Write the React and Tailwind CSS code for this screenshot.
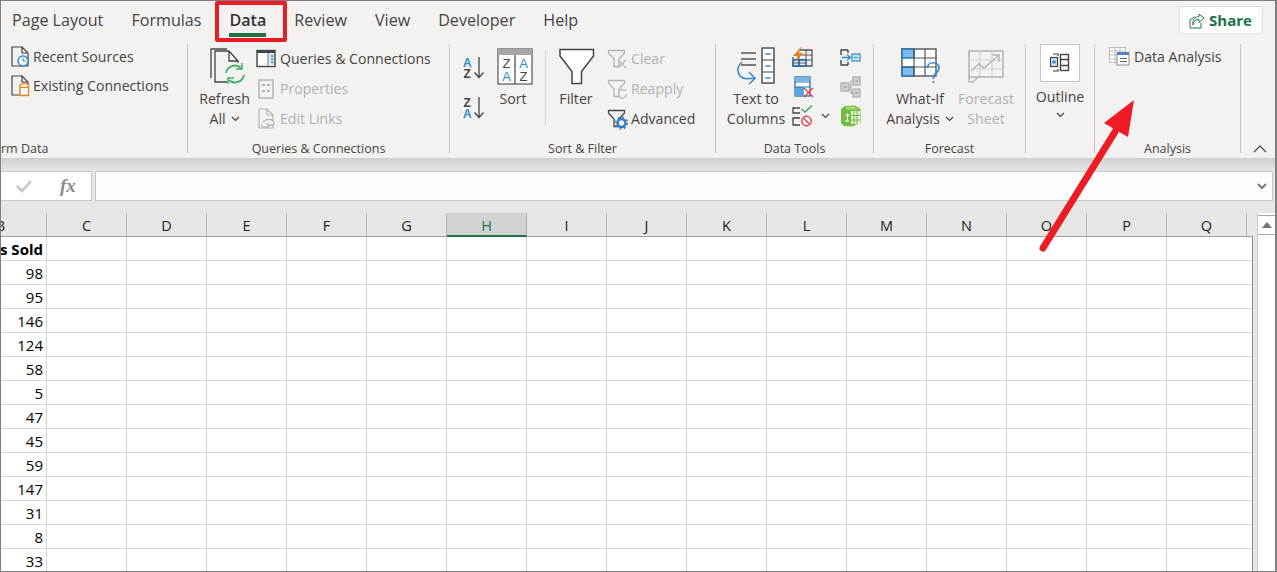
import React from "react";

const D = "#444444", G = "#b4b4b4", B = "#2b8ccf";

const Page = ({ c = D, x = 1, y = 1, w = 16, h = 19 }) => (
  <path d={`M${x + w - 6} ${y}H${x}V${y + h}H${x + w}V${y + 6}L${x + w - 6} ${y}V${y + 6}H${x + w}`} fill="none" stroke={c} strokeWidth="1.2" />
);

const Svg = ({ w, h, children, className = "" }) => (
  <svg width={w} height={h} viewBox={`0 0 ${w} ${h}`} className={`shrink-0 ${className}`}>{children}</svg>
);

const Funnel = ({ c }) => (
  <path d="M1.5 2.5H17.5V5L12 11V18.5H7V11L1.5 5Z" fill="none" stroke={c} strokeWidth="1.3" />
);

const Icons = {
  recent: (
    <Svg w={22} h={22}>
      <Page y={1} />
      <circle cx="12" cy="15" r="5" fill="#fff" stroke={B} strokeWidth="1.4" />
      <path d="M12 12V15H15" fill="none" stroke={B} strokeWidth="1" />
    </Svg>
  ),
  existing: (
    <Svg w={22} h={22}>
      <Page y={1} />
      <path d="M9 10.5C9 8 17.5 8 17.5 10.5V20.5H9Z" fill="#fff" stroke="#e8811f" strokeWidth="1.4" />
      <path d="M9 11.5C11 13 15.5 13 17.5 11.5" fill="none" stroke="#e8811f" strokeWidth="1.2" />
    </Svg>
  ),
  refresh: (
    <Svg w={36} h={38}>
      <path d="M1 30V1H17" fill="none" stroke={D} strokeWidth="1.3" />
      <path d="M19 3H5V34H17" fill="#f3f2f1" stroke={D} strokeWidth="1.3" />
      <path d="M19 3L28 13V15M19 3V13H28" fill="none" stroke={D} strokeWidth="1.3" />
      <path d="M16 25A9 9 0 0 1 31 20" fill="none" stroke="#45ad6d" strokeWidth="1.8" />
      <path d="M34 27A9 9 0 0 1 19 32" fill="none" stroke="#45ad6d" strokeWidth="1.8" />
      <path d="M32 15V21H26M18 36V30H24" fill="none" stroke="#45ad6d" strokeWidth="1.5" />
    </Svg>
  ),
  queries: (
    <Svg w={24} h={20}>
      <rect x="1" y="1.5" width="18" height="16" fill="#fff" stroke={D} strokeWidth="1.4" />
      <rect x="1" y="1" width="18" height="3" fill={D} />
      <rect x="12" y="4" width="6" height="13" fill="#d9e9f6" />
      <path d="M15 7H17.5M15 10H17.5M15 13H17.5" stroke={B} strokeWidth="1.3" />
      <path d="M12 4V17" stroke="#777" />
    </Svg>
  ),
  properties: (
    <Svg w={24} h={22}>
      <rect x="3" y="2" width="14" height="18" fill="none" stroke={G} strokeWidth="1.5" />
      <path d="M6 7H9M6 13H9M11 7H14M11 13H14" stroke={G} strokeWidth="2" />
    </Svg>
  ),
  editlinks: (
    <Svg w={24} h={22}>
      <Page c={G} x={3} y={1} w={14} h={19} />
      <path d="M7 14C10 10 18 11 18 15C18 18 11 18 11 15M13 18C9 21 4 19 6 16" fill="#f3f2f1" stroke={G} strokeWidth="1.3" />
    </Svg>
  ),
  sortaz: (
    <Svg w={24} h={24}>
      <text x="0" y="11" fontSize="12" fontWeight="700" fill={B} fontFamily="Liberation Sans, sans-serif">A</text>
      <text x="0.5" y="22" fontSize="12" fontWeight="700" fill={D} fontFamily="Liberation Sans, sans-serif">Z</text>
      <path d="M16 1V21M11.5 16.5L16 21.5L20.5 16.5" fill="none" stroke={D} strokeWidth="1.3" />
    </Svg>
  ),
  sortza: (
    <Svg w={24} h={24}>
      <text x="0.5" y="11" fontSize="12" fontWeight="700" fill={D} fontFamily="Liberation Sans, sans-serif">Z</text>
      <text x="0" y="22" fontSize="12" fontWeight="700" fill={B} fontFamily="Liberation Sans, sans-serif">A</text>
      <path d="M16 1V21M11.5 16.5L16 21.5L20.5 16.5" fill="none" stroke={D} strokeWidth="1.3" />
    </Svg>
  ),
  sort: (
    <Svg w={36} h={37}>
      <rect x="1" y="1" width="34" height="35" fill="#fff" stroke="#6b6b6b" strokeWidth="1.4" />
      <rect x="1" y="1" width="34" height="6" fill="#a6a6a6" />
      <path d="M18 7V36" stroke={D} strokeWidth="1.2" />
      <text x="9.5" y="20" textAnchor="middle" fontSize="13" fill={D} fontFamily="Liberation Sans, sans-serif">Z</text>
      <text x="9.5" y="33" textAnchor="middle" fontSize="13" fill={B} fontFamily="Liberation Sans, sans-serif">A</text>
      <text x="26.5" y="20" textAnchor="middle" fontSize="13" fill={B} fontFamily="Liberation Sans, sans-serif">A</text>
      <text x="26.5" y="33" textAnchor="middle" fontSize="13" fill={D} fontFamily="Liberation Sans, sans-serif">Z</text>
    </Svg>
  ),
  filter: (
    <Svg w={36} h={37}>
      <path d="M1 1.5H34.5V8L22.5 23.5V35.5H13V23.5L1 8Z" fill="#fff" stroke={D} strokeWidth="1.5" />
    </Svg>
  ),
  clear: (
    <Svg w={24} h={22}>
      <Funnel c={G} />
      <path d="M11 12L19 20M19 12L11 20" stroke={G} strokeWidth="1.3" />
    </Svg>
  ),
  reapply: (
    <Svg w={24} h={22}>
      <Funnel c={G} />
      <path d="M11 15A5 5 0 0 1 19 13M20 16A5 5 0 0 1 12 19" fill="#f3f2f1" stroke={G} strokeWidth="1.2" />
    </Svg>
  ),
  advanced: (
    <Svg w={24} h={22}>
      <Funnel c={D} />
      <circle cx="14.5" cy="15" r="4" fill="#f3f2f1" stroke="#2f7fc4" strokeWidth="2.6" />
      <circle cx="14.5" cy="15" r="6" fill="none" stroke="#2f7fc4" strokeWidth="1.4" strokeDasharray="2 2.7" />
    </Svg>
  ),
  textcols: (
    <Svg w={40} h={40}>
      <path d="M5 6H20M5 12H20M5 18H20" stroke="#555" strokeWidth="1.4" />
      <rect x="26" y="1" width="12" height="35" fill="#fff" stroke={D} strokeWidth="1.4" />
      <path d="M26 13H38M26 25H38" stroke={D} strokeWidth="1.2" />
      <path d="M29.5 7H34.5M29.5 19H34.5M29.5 31H34.5" stroke={B} strokeWidth="1.4" />
      <path d="M6 15C-1 21 1 33 13 31.5H18" fill="none" stroke={B} strokeWidth="1.5" />
      <path d="M13 25L19 31.5L13 37" fill="none" stroke={B} strokeWidth="1.5" />
    </Svg>
  ),
  flash: (
    <Svg w={24} h={22}>
      <path d="M7 3H20V19H1V10" fill="none" stroke="#555" strokeWidth="1.3" />
      <path d="M1.5 12.5H14M1.5 16H14M7 8V19M14 3V19M7 8H20M14 13H20" fill="none" stroke="#555" strokeWidth="1" />
      <path d="M1 13V19H14V13H1M7 13V19" fill="none" stroke="#1f6fb5" strokeWidth="1.5" />
      <path d="M9 0L1 9H5.5L3 15L11 6H6.5L10 0Z" fill="#e8811f" />
    </Svg>
  ),
  dupes: (
    <Svg w={24} h={22}>
      <rect x="3" y="1" width="15" height="19" fill="#fff" stroke="#1f6fb5" strokeWidth="1.3" />
      <rect x="3" y="1" width="15" height="4" fill="#7fb2dd" />
      <rect x="3" y="11" width="9" height="9" fill="#5ea3dc" />
      <path d="M3 6H18M3 11H18" stroke="#1f6fb5" />
      <path d="M12 12L21 21M21 12L12 21" stroke="#e8414a" strokeWidth="1.4" />
    </Svg>
  ),
  validate: (
    <Svg w={24} h={22}>
      <path d="M8 3H1V8H8M8 13H1V20H8" fill="none" stroke={D} strokeWidth="1.3" />
      <path d="M9.5 4L13 7L20 0.5" fill="none" stroke="#3fa35f" strokeWidth="1.5" />
      <circle cx="14.5" cy="16" r="4.7" fill="#fff" stroke="#e8414a" strokeWidth="1.5" />
      <path d="M11.5 13L17.5 19" stroke="#e8414a" strokeWidth="1.5" />
    </Svg>
  ),
  consolidate: (
    <Svg w={22} h={20}>
      <path d="M8 2H1V7M1 12V17H8" fill="none" stroke={D} strokeWidth="1.4" />
      <path d="M8 2V5M8 14V17" stroke={D} strokeWidth="1.4" />
      <path d="M2 9.5H10M7 6.5L10.5 9.5L7 12.5" fill="none" stroke={B} strokeWidth="1.3" />
      <rect x="12" y="6" width="8" height="7" fill="#cfe4f5" stroke={B} strokeWidth="1.2" />
      <path d="M14 9.5H18" stroke={B} />
    </Svg>
  ),
  relations: (
    <Svg w={22} h={22}>
      <rect x="1" y="7" width="8" height="8" fill="#d0d0d0" stroke={G} strokeWidth="1.4" />
      <rect x="13" y="1" width="7" height="8" fill="#d0d0d0" stroke={G} strokeWidth="1.4" />
      <rect x="13" y="13" width="7" height="8" fill="#d0d0d0" stroke={G} strokeWidth="1.4" />
      <path d="M3 11H7M15 5H18M15 17H18" stroke="#999" />
      <path d="M9 11H11V5H13M11 11V17H13" fill="none" stroke={G} strokeWidth="1.4" />
    </Svg>
  ),
  model: (
    <Svg w={22} h={22}>
      <path d="M5 1L15 0.5L20.5 4V18L12 21.5L4 21L1 18V4Z" fill="#74bb42" />
      <path d="M5 2L14 1.5L19 4.5H7Z" fill="#a5d67c" />
      <rect x="11" y="6" width="9" height="13" fill="#e5f3d8" />
      <path d="M14 6V19M17 6V19M11 10.5H20M11 15H20" stroke="#74bb42" />
      <path d="M7.5 16V9M5.8 11L7.5 9L9.2 11M5 16H9" stroke="#fff" strokeWidth="1.1" fill="none" />
    </Svg>
  ),
  whatif: (
    <Svg w={40} h={38}>
      <rect x="1" y="1" width="34" height="27" fill="#fff" stroke="#555" strokeWidth="1.4" />
      <rect x="1" y="1" width="12" height="9" fill="#7dbbea" stroke="#1f6fb5" strokeWidth="1.4" />
      <rect x="1" y="19" width="12" height="9" fill="#7dbbea" stroke="#1f6fb5" strokeWidth="1.4" />
      <path d="M13 10H35M1 19H35M13 1V28M24 1V28" stroke="#555" strokeWidth="1.2" />
      <path d="M26.5 20C26.5 13 38 13 38 20C38 25 32.5 25 32.5 30V31M32.5 33V35" fill="none" stroke={B} strokeWidth="1.7" />
    </Svg>
  ),
  forecast: (
    <Svg w={37} h={33}>
      <rect x="1" y="1" width="34" height="26" fill="none" stroke={G} strokeWidth="1.6" />
      <path d="M12 1V27M24 1V27M1 10H35M1 19H35" stroke="#cfcfcf" strokeWidth="1.2" />
      <path d="M3 21L11 14L16 18L30 6M24 5H31V12" fill="none" stroke={G} strokeWidth="1.4" />
      <path d="M10 27L5 32H1V27" fill="none" stroke={G} strokeWidth="1.4" />
    </Svg>
  ),
  outline: (
    <Svg w={22} h={20}>
      <rect x="1.5" y="4.5" width="7" height="9" fill="#cfe4f5" stroke={D} strokeWidth="1.2" />
      <path d="M3 9H7M5 7V11" stroke={B} strokeWidth="1.3" />
      <path d="M4 1H9V3M4 18H9V16" fill="none" stroke={D} strokeWidth="1.2" />
      <rect x="11.5" y="1.5" width="8" height="16" fill="#fff" stroke={D} strokeWidth="1.4" />
      <path d="M11.5 6.5H19.5M11.5 12.5H19.5" stroke={D} strokeWidth="1.3" />
    </Svg>
  ),
  analysis: (
    <Svg w={25} h={20}>
      <rect x="0.5" y="0.5" width="16" height="15" fill="#fff" stroke="#bdbdbd" />
      <path d="M0.5 4H16M0.5 8H16M0.5 12H16M6 0.5V15.5M11 0.5V15.5" stroke="#bdbdbd" />
      <rect x="8" y="6" width="12" height="12" fill="#fff" stroke="#8c8c8c" />
      <rect x="8" y="5" width="12" height="3" fill="#4f81bd" />
      <path d="M11 11.5H18M11 14.5H18" stroke="#666" />
    </Svg>
  ),
  share: (
    <Svg w={17} h={16}>
      <path d="M2 7V15H13V10M2 7L7 3.5" fill="none" stroke="#217346" strokeWidth="1" />
      <path d="M5 12C5 8 8 6.5 11 6.5V9.5L16 5L11 1V3.5C7 4 4 7 5 12Z" fill="#fff" stroke="#217346" strokeWidth="1" />
    </Svg>
  ),
};

const Chevron = ({ className = "", color = "#444", w = 9 }) => (
  <svg width={w} height="6" viewBox="0 0 9 6" className={`shrink-0 ${className}`}>
    <path d="M1 1L4.5 4.5L8 1" fill="none" stroke={color} strokeWidth="1.2" />
  </svg>
);

const Sep = () => <div className="w-px h-[109px] mt-[2px] shrink-0 bg-[#c8c6c4]" />;

const Group = ({ w, label, left, children }) => (
  <div className={`${w} h-[116px] shrink-0 flex flex-col`}>
    <div className="flex-1 flex min-h-0">{children}</div>
    <div className={`h-[20px] leading-[20px] pt-px text-[12.5px] text-[#444] whitespace-nowrap ${left ? "text-left" : "text-center"}`}>{label}</div>
  </div>
);

const Big = ({ w, icon, lines, disabled, iconClass = "" }) => (
  <div className={`${w} shrink-0 flex flex-col items-center`}>
    <div className={`h-[47px] w-full flex items-center justify-center pt-[2px] ${iconClass}`}>{icon}</div>
    {lines.map((l, i) => (
      <div key={i} className={`h-[20px] leading-[20px] text-[14.2px] whitespace-nowrap flex items-center gap-[5px] ${disabled ? "text-[#b1b1b1]" : "text-[#444]"}`}>
        {l.replace("~", "")}
        {l.endsWith("~") && <Chevron />}
      </div>
    ))}
  </div>
);

const Small = ({ icon, label, disabled, h }) => (
  <div className={`${h} flex items-center whitespace-nowrap text-[14.1px] ${disabled ? "text-[#b1b1b1]" : "text-[#444]"}`}>
    {icon}
    <span>{label}</span>
  </div>
);

const tabs = ["Page Layout", "Formulas", "Data", "Review", "View", "Developer", "Help"];
const cols = ["C", "D", "E", "F", "G", "H", "I", "J", "K", "L", "M", "N", "O", "P"];
const values = [98, 95, 146, 124, 58, 5, 47, 45, 59, 147, 31, 8, 33];

export default function App() {
  return (
    <div className="relative w-[1277px] h-[572px] overflow-hidden box-border border border-r-2 border-[#7f7f7f] bg-[#e6e6e6] font-['Open_Sans',sans-serif]">
      {/* Tabs */}
      <div className="h-[41px] bg-[#f3f2f1] flex items-start relative">
        <div className="flex gap-7 pl-[11px] pt-[5px] text-[16.13px] leading-[28px] text-[#444]">
          {tabs.map((t) => (
            <div key={t} className={`relative whitespace-nowrap ${t === "Data" ? "font-semibold text-[#333]" : ""}`}>
              {t}
              {t === "Data" && <div className="absolute left-0 right-0 top-[27px] h-[4px] bg-[#217346]" />}
            </div>
          ))}
        </div>
        <div className="ml-auto mr-[12px] mt-[5px] w-[84px] h-[28px] bg-white border border-[#e1dfdd] rounded-[3px] flex items-center justify-center gap-[4px] pt-px pr-[2px] text-[#217346] font-bold text-[15px]">
          {Icons.share}
          <span>Share</span>
        </div>
      </div>

      {/* Ribbon */}
      <div className="h-[116px] bg-[#f3f2f1] flex">
        <Group w="w-[186px]" label="rm Data" left>
          <div className="pl-[10px]">
            <Small h="h-[29px]" icon={Icons.recent} label="Recent Sources" />
            <Small h="h-[29px]" icon={Icons.existing} label="Existing Connections" />
          </div>
        </Group>
        <Sep />
        <Group w="w-[261px]" label="Queries & Connections">
          <div className="flex pl-[12px]">
            <Big w="w-[49px]" icon={Icons.refresh} iconClass="pl-[6px]" lines={["Refresh", "All~"]} />
            <div className="ml-[7px] pt-[2px]">
              <Small h="h-[30px]" icon={Icons.queries} label="Queries & Connections" />
              <Small h="h-[30px]" icon={Icons.properties} label="Properties" disabled />
              <Small h="h-[30px]" icon={Icons.editlinks} label="Edit Links" disabled />
            </div>
          </div>
        </Group>
        <Sep />
        <Group w="w-[265px]" label="Sort & Filter">
          <div className="flex pl-[13px]">
            <div className="w-[25px] pt-[14px] flex flex-col gap-[16px]">
              {Icons.sortaz}
              {Icons.sortza}
            </div>
            <Big w="w-[50px]" icon={Icons.sort} iconClass="pl-[3px]" lines={["Sort"]} />
            <div className="w-px h-[75px] mt-[8px] ml-[7px] bg-[#d2d0ce]" />
            <div className="ml-[5px]">
              <Big w="w-[50px]" icon={Icons.filter} iconClass="pl-px" lines={["Filter"]} />
            </div>
            <div className="ml-[6px] pt-[2px]">
              <Small h="h-[30px]" icon={Icons.clear} label="Clear" disabled />
              <Small h="h-[30px]" icon={Icons.reapply} label="Reapply" disabled />
              <Small h="h-[30px]" icon={Icons.advanced} label="Advanced" />
            </div>
          </div>
        </Group>
        <Sep />
        <Group w="w-[157px]" label="Data Tools">
          <div className="flex pl-[7px]">
            <Big w="w-[66px]" icon={Icons.textcols} lines={["Text to", "Columns"]} />
            <div className="ml-[3px] w-[44px] pt-[1px]">
              <div className="h-[29px] flex items-center">{Icons.flash}</div>
              <div className="h-[29px] flex items-center">{Icons.dupes}</div>
              <div className="h-[29px] flex items-center">
                {Icons.validate}
                <Chevron className="ml-[5px]" />
              </div>
            </div>
            <div className="ml-[4px] pt-[1px]">
              <div className="h-[29px] flex items-center">{Icons.consolidate}</div>
              <div className="h-[29px] flex items-center">{Icons.relations}</div>
              <div className="h-[29px] flex items-center">{Icons.model}</div>
            </div>
          </div>
        </Group>
        <Sep />
        <Group w="w-[151px]" label="Forecast">
          <div className="flex pl-[10px]">
            <Big w="w-[72px]" icon={Icons.whatif} iconClass="pl-[2px]" lines={["What-If", "Analysis~"]} />
            <Big w="w-[60px]" icon={Icons.forecast} lines={["Forecast", "Sheet"]} disabled />
          </div>
        </Group>
        <Sep />
        <Group w="w-[68px]" label="">
          <div className="w-full flex flex-col items-center pt-[2px]">
            <div className="w-[40px] h-[38px] bg-white border border-[#c8c6c4] flex items-center justify-center">{Icons.outline}</div>
            <div className="mt-[5px] h-[20px] leading-[20px] text-[14.2px] text-[#444]">Outline</div>
            <Chevron className="mt-[5px]" />
          </div>
        </Group>
        <Sep />
        <Group w="w-[145px]" label="Analysis">
          <div className="pl-[14px]">
            <Small h="h-[29px]" icon={Icons.analysis} label="Data Analysis" />
          </div>
        </Group>
        <Sep />
        <div className="flex-1 flex items-end justify-end pr-[8px] pb-[5px]">
          <svg width="14" height="8" viewBox="0 0 14 8"><path d="M1 7L7 1L13 7" fill="none" stroke="#444" strokeWidth="1.2" /></svg>
        </div>
      </div>

      {/* Formula bar */}
      <div className="h-[55px]">
        <div className="h-[13px] bg-gradient-to-b from-[#cfcfcf] to-[#e6e6e6]" />
        <div className="h-[30px] flex gap-[3px] pr-[2px]">
          <div className="w-[91px] bg-white border border-[#c8c8c8] border-l-0 flex items-center">
            <svg width="18" height="14" viewBox="0 0 18 14" className="ml-[14px]"><path d="M2 7L7 12L16 2" fill="none" stroke="#c6c6c6" strokeWidth="2.6" /></svg>
            <span className="ml-[27px] font-['Liberation_Serif',serif] italic font-bold text-[19px] text-[#8a8a8a]">fx</span>
          </div>
          <div className="flex-1 bg-[#fdfdfd] border border-[#c8c8c8] flex items-center justify-end pr-[5px]">
            <svg width="10" height="7" viewBox="0 0 10 7"><path d="M1 1L5 5L9 1" fill="none" stroke="#777" strokeWidth="2" /></svg>
          </div>
        </div>
      </div>

      {/* Sheet */}
      <div className="flex">
        <div className="w-[1252px] shrink-0">
          <div className="flex h-[24px] border-b border-[#9f9f9f] bg-[#e6e6e6] text-[14.5px] text-[#222]">
            <div className="w-[46px] shrink-0 border-r border-[#b8b8b8] overflow-hidden flex justify-end pr-[41px] leading-[25px]">
              <span className="shrink-0">B</span>
            </div>
            {cols.concat("Q").map((c) => (
              <div key={c} className={`w-[80px] shrink-0 border-r text-center leading-[25px] ${c === "H" ? "h-[24px] bg-[#d2d2d2] border-[#ababab] border-b-2 border-b-[#217346] text-[#217346]" : "border-[#b8b8b8]"}`}>
                {c}
              </div>
            ))}
          </div>
          <div className="border-r border-[#8f8f8f] bg-white">
            {["Units Sold", ...values].map((v, i) => (
              <div key={i} className="flex h-[24px] border-b border-[#d4d4d4] text-[15px] text-black leading-[25px]">
                <div className={`w-[46px] shrink-0 border-r border-[#d4d4d4] overflow-hidden flex justify-end pr-[3px] ${i === 0 ? "font-bold" : ""}`}>
                  <span className="shrink-0 whitespace-nowrap">{v}</span>
                </div>
                {cols.map((c) => (
                  <div key={c} className="w-[80px] shrink-0 border-r border-[#d4d4d4]" />
                ))}
                <div className="flex-1" />
              </div>
            ))}
          </div>
        </div>
        <div className="ml-[4px] w-[18px] shrink-0 bg-white border-l border-[#c8c8c8]">
          <div className="h-[20px] mt-[2px] border-y border-[#ababab] flex items-center justify-center">
            <svg width="10" height="6" viewBox="0 0 10 6"><path d="M5 0L10 6H0Z" fill="#777" /></svg>
          </div>
        </div>
      </div>

      {/* Annotations */}
      <div className="absolute left-[214px] top-0 w-[72px] h-[41px] border-4 border-[#ed1c24] rounded-[2px]" />
      <svg className="absolute left-0 top-0 pointer-events-none" width="1277" height="572" viewBox="0 0 1277 572">
        <path d="M1042 247L1117 126" stroke="#ed1c24" strokeWidth="7" strokeLinecap="round" fill="none" />
        <path d="M1133 99L1103 122L1127 136Z" fill="#ed1c24" />
      </svg>
    </div>
  );
}
